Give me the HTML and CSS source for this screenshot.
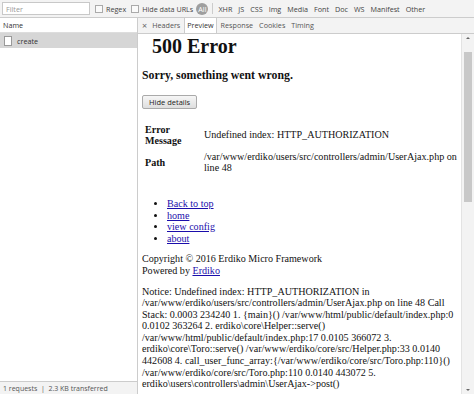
FILE: index.html
```html
<!DOCTYPE html>
<html lang="en">
<head>
    <meta charset="UTF-8">
    <title>Network - Preview</title>
    <link rel="stylesheet" href="styles.css">
</head>
<body>
    <div class="toolbar">
        <input class="filter" type="text" placeholder="Filter">
        <span class="check"></span><span class="opt">Regex</span>
        <span class="check"></span><span class="opt">Hide data URLs</span>
        <span class="pill">All</span>
        <span class="sep"></span>
        <span class="type">XHR</span>
        <span class="type">JS</span>
        <span class="type">CSS</span>
        <span class="type">Img</span>
        <span class="type">Media</span>
        <span class="type">Font</span>
        <span class="type">Doc</span>
        <span class="type">WS</span>
        <span class="type">Manifest</span>
        <span class="type">Other</span>
    </div>

    <div class="panes">
        <!-- request list -->
        <div class="list">
            <div class="list-head">Name</div>
            <div class="row selected"><span class="file-icon"></span>create</div>
            <div class="list-fill"></div>
            <div class="status">1 requests &nbsp;|&nbsp; 2.3 KB transferred</div>
        </div>

        <!-- details -->
        <div class="details">
            <div class="tabs">
                <span class="close">&times;</span>
                <span class="tab">Headers</span>
                <span class="tab active">Preview</span>
                <span class="tab">Response</span>
                <span class="tab">Cookies</span>
                <span class="tab">Timing</span>
            </div>
            <div class="preview">
                <div class="page">
                    <h1>500 Error</h1>
                    <h3>Sorry, something went wrong.</h3>
                    <button class="hide-btn">Hide details</button>

                    <table class="err-table">
                        <tr>
                            <th>Error<br>Message</th>
                            <td>Undefined index: HTTP_AUTHORIZATION</td>
                        </tr>
                        <tr>
                            <th>Path</th>
                            <td>/var/www/erdiko/users/src/controllers/admin/UserAjax.php on line 48</td>
                        </tr>
                    </table>

                    <ul class="links">
                        <li><a href="#">Back to top</a></li>
                        <li><a href="#">home</a></li>
                        <li><a href="#">view config</a></li>
                        <li><a href="#">about</a></li>
                    </ul>

                    <p>Copyright &copy; 2016 Erdiko Micro Framework<br>Powered by <a href="#">Erdiko</a></p>

                    <p class="notice">Notice: Undefined index: HTTP_AUTHORIZATION in /var/www/erdiko/users/src/controllers/admin/UserAjax.php on line 48 Call Stack: 0.0003 234240 1. {main}() /var/www/html/public/default/index.php:0 0.0102 363264 2. erdiko\core\Helper::serve() /var/www/html/public/default/index.php:17 0.0105 366072 3. erdiko\core\Toro::serve() /var/www/erdiko/core/src/Helper.php:33 0.0140 442608 4. call_user_func_array:{/var/www/erdiko/core/src/Toro.php:110}() /var/www/erdiko/core/src/Toro.php:110 0.0140 443072 5. erdiko\users\controllers\admin\UserAjax-&gt;post()</p>
                </div>
                <div class="scrollbar">
                    <span class="arrow up"></span>
                    <div class="track"><div class="thumb"></div></div>
                    <span class="arrow down"></span>
                </div>
            </div>
        </div>
    </div>
</body>
</html>
```

FILE: styles.css
```css
body {
    margin: 0;
    width: 474px;
    height: 394px;
    overflow: hidden;
    font-family: "Open Sans", "DejaVu Sans", sans-serif;
    font-size: 7.2px;
    color: #333;
    background-color: #fff;
}

/* top filter bar */
.toolbar {
    height: 18px;
    box-sizing: border-box;
    display: flex;
    align-items: center;
    padding-left: 2px;
    background-color: #f3f3f3;
    border-bottom: 1px solid #ccc;
    color: #444;
}

.filter {
    width: 88px;
    height: 13px;
    box-sizing: border-box;
    border: 1px solid #c8c8c8;
    padding: 0 3px;
    font-family: inherit;
    font-size: 7.2px;
    margin-right: 5px;
}

.filter::placeholder {
    color: #999;
}

.check {
    width: 6px;
    height: 6px;
    border: 1px solid #aaa;
    background-color: #fafafa;
    margin-right: 3px;
}

.opt {
    margin-right: 5px;
}

.opt + .pill {
    margin-left: -2px;
}

.pill {
    background-color: #9e9e9e;
    color: #fff;
    border-radius: 6px;
    padding: 1px 2px;
    line-height: 10px;
}

.sep {
    width: 1px;
    height: 11px;
    background-color: #ccc;
    margin: 0 5px 0 4px;
}

.type {
    margin-right: 6px;
}

.panes {
    display: flex;
    height: 376px;
}

/* request list */
.list {
    width: 137px;
    display: flex;
    flex-direction: column;
    border-right: 1px solid #ccc;
}

.list-head {
    height: 15px;
    box-sizing: border-box;
    padding: 2px 3px;
    border-bottom: 1px solid #ddd;
    color: #333;
}

.row {
    height: 15px;
    display: flex;
    align-items: center;
    padding-left: 4px;
    color: #333;
}

.row.selected {
    background-color: #d6d6d6;
}

.file-icon {
    width: 6px;
    height: 8px;
    border: 1px solid #999;
    background-color: #fff;
    margin-right: 5px;
}

.list-fill {
    flex: 1;
}

.status {
    height: 13px;
    box-sizing: border-box;
    border-top: 1px solid #ccc;
    background-color: #f3f3f3;
    padding: 2px 3px 0;
    font-size: 7px;
    color: #555;
}

/* details */
.details {
    flex: 1;
    display: flex;
    flex-direction: column;
    min-width: 0;
}

.tabs {
    height: 16px;
    box-sizing: border-box;
    display: flex;
    align-items: stretch;
    border-bottom: 1px solid #ccc;
    background-color: #f3f3f3;
    color: #555;
}

.close {
    padding: 0 3px 0 4px;
    line-height: 15px;
    font-size: 9px;
    color: #666;
}

.tab {
    padding: 0 2px;
    line-height: 15px;
    margin-right: 2px;
}

.tab.active {
    background-color: #fff;
    border-left: 1px solid #ccc;
    border-right: 1px solid #ccc;
    color: #333;
}

.preview {
    flex: 1;
    display: flex;
    overflow: hidden;
}

.page {
    flex: 1;
    padding: 0 0 0 4px;
    font-family: "Liberation Serif", "Times New Roman", serif;
    font-size: 10.1px;
    line-height: 1.15;
    color: #111;
}

.page h1 {
    font-size: 20px;
    margin: 0 0 0 10px;
    line-height: 24px;
}

.page h3 {
    font-size: 11.8px;
    margin: 11px 0 12px;
}

.hide-btn {
    font-family: "Open Sans", "DejaVu Sans", sans-serif;
    font-size: 7.5px;
    padding: 1px 6px;
    border: 1px solid #aaa;
    border-radius: 2px;
    background: linear-gradient(#f6f6f6, #dedede);
    color: #222;
}

.err-table {
    border-collapse: separate;
    border-spacing: 2px;
    margin: 12px 0 21px;
}

.err-table th {
    text-align: left;
    width: 55px;
    padding: 1px;
}

.err-table td {
    padding: 1px 0 1px 1px;
}

.links {
    margin: 0;
    padding-left: 25px;
}

.page a {
    color: #1a0dab;
}

.page p {
    margin: 9px 0 0;
}

.notice {
    padding-right: 3px;
}

/* fake scrollbar */
.scrollbar {
    width: 12px;
    display: flex;
    flex-direction: column;
    align-items: center;
    background-color: #f3f3f3;
    border-left: 1px solid #e3e3e3;
}

.arrow {
    width: 0;
    height: 0;
    border-left: 2px solid transparent;
    border-right: 2px solid transparent;
    margin: 3px 0;
}

.arrow.up {
    border-bottom: 2px solid #666;
}

.arrow.down {
    border-top: 2px solid #666;
}

.track {
    flex: 1;
    width: 100%;
    display: flex;
    justify-content: center;
}

.thumb {
    width: 8px;
    height: 150px;
    margin-top: 10px;
    background-color: #c8c8c8;
}
```
